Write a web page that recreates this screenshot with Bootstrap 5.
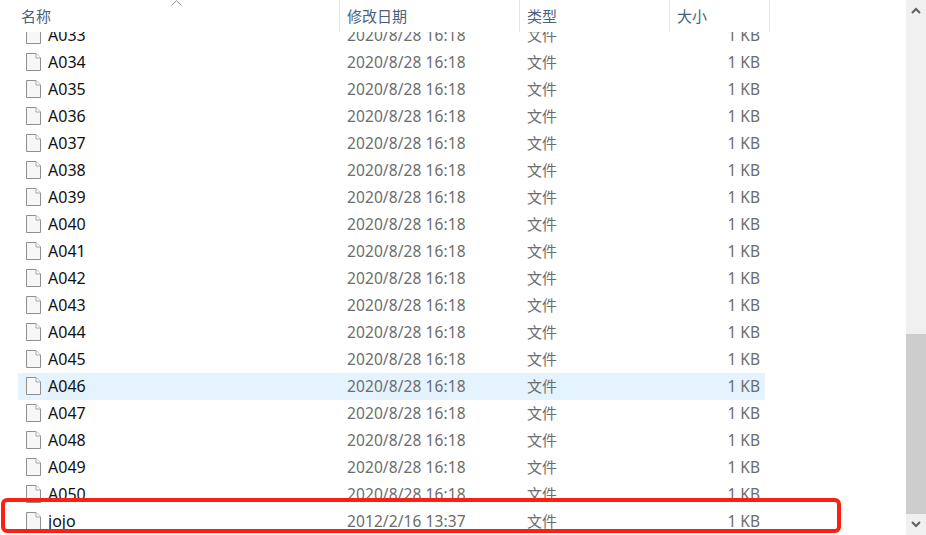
<!DOCTYPE html>
<html lang="zh">
<head>
<meta charset="utf-8">
<title>文件列表</title>
<link href="https://cdn.jsdelivr.net/npm/bootstrap@5.3.0/dist/css/bootstrap.min.css" rel="stylesheet">
<style>
html,body{height:535px;overflow:hidden;background:#fff;}
body{font-family:"Noto Sans","Noto Sans CJK SC",sans-serif;font-size:15.5px;}
.shell{width:926px;height:535px;position:relative;}
.pane{width:906px;height:535px;overflow:hidden;}
.sbar{width:20px;height:535px;background:#f0f0f0;}
.sgap{flex:1 1 auto;}
.sthumb{height:180px;background:#cdcdcd;}
.sbtn{height:21px;}
.hdr{height:32px;position:relative;z-index:1;background:#fff;color:#4c607a;font-size:15px;}
.hcell{height:32px;line-height:33px;border-right:1px solid #e5e5e5;padding-left:7px;}
.c1{width:340px;padding-left:21px;position:relative;}
.c2{width:180px;}
.c3{width:150px;}
.c4{width:100px;}
.sortup{position:absolute;left:171px;top:0;}
.rows{margin-top:-10px;margin-left:18px;width:747px;}
.frow{height:27px;line-height:26px;color:#6d6d6d;}
.frow.hot{background:#e5f3ff;}
.fname{width:322px;color:#111;padding-left:8px;padding-bottom:1px;font-size:16px;}
.fname svg{margin-right:7px;margin-bottom:1px;flex:none;}
.fdate{width:180px;padding-left:7px;white-space:nowrap;letter-spacing:.1px;}
.ftype{width:150px;padding-left:7px;font-size:15px;}
.fsize{width:90px;text-align:right;white-space:nowrap;}
.mark-box{position:absolute;left:1px;top:498px;width:840px;height:35px;border:4px solid #fb2014;border-radius:6px;z-index:2;}
</style>
</head>
<body>
<svg width="0" height="0" class="d-block position-absolute">
  <symbol id="doc" viewBox="0 0 15 18">
    <path d="M.5.5H10L14.5 5V17.5H.5Z" fill="#f6f7f8" stroke="#8f8f8f"/>
    <path d="M10 .5V5H14.5" fill="#fff" stroke="#a5a5a5"/>
  </symbol>
</svg>
<div class="shell d-flex">
  <div class="pane">
    <div class="hdr d-flex">
      <div class="hcell c1">名称
        <svg class="sortup" width="11" height="6" viewBox="0 0 11 6"><path d="M.5 5.5 5.5.7 10.5 5.5" fill="none" stroke="#8a96a5"/></svg>
      </div>
      <div class="hcell c2">修改日期</div>
      <div class="hcell c3">类型</div>
      <div class="hcell c4">大小</div>
    </div>
    <div class="rows">
      <div class="frow d-flex"><div class="fname d-flex align-items-center"><svg width="15" height="18"><use href="#doc"/></svg>A033</div><div class="fdate">2020/8/28 16:18</div><div class="ftype">文件</div><div class="fsize">1 KB</div></div>
      <div class="frow d-flex"><div class="fname d-flex align-items-center"><svg width="15" height="18"><use href="#doc"/></svg>A034</div><div class="fdate">2020/8/28 16:18</div><div class="ftype">文件</div><div class="fsize">1 KB</div></div>
      <div class="frow d-flex"><div class="fname d-flex align-items-center"><svg width="15" height="18"><use href="#doc"/></svg>A035</div><div class="fdate">2020/8/28 16:18</div><div class="ftype">文件</div><div class="fsize">1 KB</div></div>
      <div class="frow d-flex"><div class="fname d-flex align-items-center"><svg width="15" height="18"><use href="#doc"/></svg>A036</div><div class="fdate">2020/8/28 16:18</div><div class="ftype">文件</div><div class="fsize">1 KB</div></div>
      <div class="frow d-flex"><div class="fname d-flex align-items-center"><svg width="15" height="18"><use href="#doc"/></svg>A037</div><div class="fdate">2020/8/28 16:18</div><div class="ftype">文件</div><div class="fsize">1 KB</div></div>
      <div class="frow d-flex"><div class="fname d-flex align-items-center"><svg width="15" height="18"><use href="#doc"/></svg>A038</div><div class="fdate">2020/8/28 16:18</div><div class="ftype">文件</div><div class="fsize">1 KB</div></div>
      <div class="frow d-flex"><div class="fname d-flex align-items-center"><svg width="15" height="18"><use href="#doc"/></svg>A039</div><div class="fdate">2020/8/28 16:18</div><div class="ftype">文件</div><div class="fsize">1 KB</div></div>
      <div class="frow d-flex"><div class="fname d-flex align-items-center"><svg width="15" height="18"><use href="#doc"/></svg>A040</div><div class="fdate">2020/8/28 16:18</div><div class="ftype">文件</div><div class="fsize">1 KB</div></div>
      <div class="frow d-flex"><div class="fname d-flex align-items-center"><svg width="15" height="18"><use href="#doc"/></svg>A041</div><div class="fdate">2020/8/28 16:18</div><div class="ftype">文件</div><div class="fsize">1 KB</div></div>
      <div class="frow d-flex"><div class="fname d-flex align-items-center"><svg width="15" height="18"><use href="#doc"/></svg>A042</div><div class="fdate">2020/8/28 16:18</div><div class="ftype">文件</div><div class="fsize">1 KB</div></div>
      <div class="frow d-flex"><div class="fname d-flex align-items-center"><svg width="15" height="18"><use href="#doc"/></svg>A043</div><div class="fdate">2020/8/28 16:18</div><div class="ftype">文件</div><div class="fsize">1 KB</div></div>
      <div class="frow d-flex"><div class="fname d-flex align-items-center"><svg width="15" height="18"><use href="#doc"/></svg>A044</div><div class="fdate">2020/8/28 16:18</div><div class="ftype">文件</div><div class="fsize">1 KB</div></div>
      <div class="frow d-flex"><div class="fname d-flex align-items-center"><svg width="15" height="18"><use href="#doc"/></svg>A045</div><div class="fdate">2020/8/28 16:18</div><div class="ftype">文件</div><div class="fsize">1 KB</div></div>
      <div class="frow hot d-flex"><div class="fname d-flex align-items-center"><svg width="15" height="18"><use href="#doc"/></svg>A046</div><div class="fdate">2020/8/28 16:18</div><div class="ftype">文件</div><div class="fsize">1 KB</div></div>
      <div class="frow d-flex"><div class="fname d-flex align-items-center"><svg width="15" height="18"><use href="#doc"/></svg>A047</div><div class="fdate">2020/8/28 16:18</div><div class="ftype">文件</div><div class="fsize">1 KB</div></div>
      <div class="frow d-flex"><div class="fname d-flex align-items-center"><svg width="15" height="18"><use href="#doc"/></svg>A048</div><div class="fdate">2020/8/28 16:18</div><div class="ftype">文件</div><div class="fsize">1 KB</div></div>
      <div class="frow d-flex"><div class="fname d-flex align-items-center"><svg width="15" height="18"><use href="#doc"/></svg>A049</div><div class="fdate">2020/8/28 16:18</div><div class="ftype">文件</div><div class="fsize">1 KB</div></div>
      <div class="frow d-flex"><div class="fname d-flex align-items-center"><svg width="15" height="18"><use href="#doc"/></svg>A050</div><div class="fdate">2020/8/28 16:18</div><div class="ftype">文件</div><div class="fsize">1 KB</div></div>
      <div class="frow d-flex"><div class="fname d-flex align-items-center"><svg width="15" height="18"><use href="#doc"/></svg>jojo</div><div class="fdate">2012/2/16 13:37</div><div class="ftype">文件</div><div class="fsize">1 KB</div></div>
    </div>
  </div>
  <div class="sbar d-flex flex-column">
    <div class="sbtn d-flex align-items-center justify-content-center">
      <svg width="10" height="7" viewBox="0 0 10 7"><path d="M1 6 5 2 9 6" fill="none" stroke="#606060" stroke-width="2"/></svg>
    </div>
    <div class="sgap"></div>
    <div class="sthumb"></div>
    <div class="sbtn d-flex align-items-center justify-content-center">
      <svg width="10" height="7" viewBox="0 0 10 7"><path d="M1 1 5 5 9 1" fill="none" stroke="#606060" stroke-width="2"/></svg>
    </div>
  </div>
  <div class="mark-box"></div>
</div>
<script src="https://cdn.jsdelivr.net/npm/bootstrap@5.3.0/dist/js/bootstrap.bundle.min.js"></script>
</body>
</html>
